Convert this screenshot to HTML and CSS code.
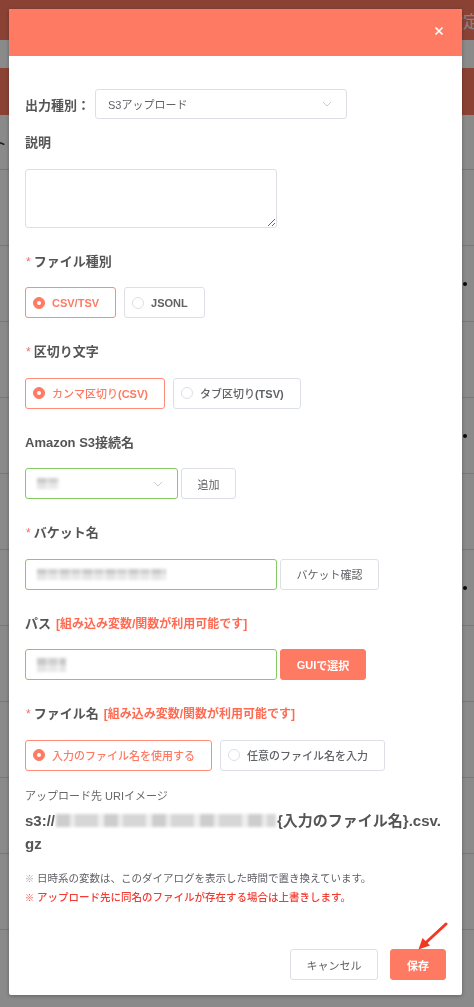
FILE: index.html
```html
<!DOCTYPE html>
<html lang="ja">
<head>
<meta charset="utf-8">
<title>S3アップロード設定</title>
<link rel="stylesheet" href="styles.css">
</head>
<body>
<div class="page">
  <header class="page-header"><span class="page-title">設定</span></header>
  <div class="page-toolbar"></div>
  <div class="page-tabs"></div>
  <div class="page-content">
    <div class="page-heading"><span class="heading-text">リスト</span></div>
    <div class="page-row"></div>
    <div class="page-row"><span class="row-dot"></span></div>
    <div class="page-row"></div>
    <div class="page-row"><span class="row-dot"></span></div>
    <div class="page-row"></div>
    <div class="page-row"><span class="row-dot"></span></div>
    <div class="page-row"></div>
    <div class="page-row"></div>
    <div class="page-row"></div>
    <div class="page-row"></div>
  </div>
</div>

<div class="overlay"></div>

<div class="dialog" role="dialog">
  <div class="dialog-header">
    <button class="dialog-close" aria-label="閉じる">
      <svg width="10" height="10" viewBox="0 0 10 10"><path d="M1.5 1.5L8.5 8.5M8.5 1.5L1.5 8.5" stroke="#fff" stroke-width="1.7"/></svg>
    </button>
  </div>
  <div class="dialog-body">
    <div class="inline-item">
      <span class="form-label-inline">出力種別：</span>
      <div class="select select-wide">
        <span class="select-text">S3アップロード</span>
        <svg class="chevron" width="10" height="6" viewBox="0 0 10 6"><path d="M1 1L5 5L9 1" fill="none" stroke="#c8cbd1" stroke-width="1"/></svg>
      </div>
    </div>

    <div class="form-item">
      <div class="form-label">説明</div>
      <textarea class="textarea"></textarea>
    </div>

    <div class="form-item">
      <div class="form-label"><span class="req">*</span>ファイル種別</div>
      <div class="radio-group">
        <label class="radio checked"><span class="radio-dot"></span><span class="en">CSV/TSV</span></label>
        <label class="radio"><span class="radio-dot"></span><span class="en">JSONL</span></label>
      </div>
    </div>

    <div class="form-item">
      <div class="form-label"><span class="req">*</span>区切り文字</div>
      <div class="radio-group">
        <label class="radio checked"><span class="radio-dot"></span><span>カンマ区切り<span class="en">(CSV)</span></span></label>
        <label class="radio"><span class="radio-dot"></span><span>タブ区切り<span class="en">(TSV)</span></span></label>
      </div>
    </div>

    <div class="form-item">
      <div class="form-label">Amazon S3接続名</div>
      <div class="control-row">
        <div class="select select-narrow valid">
          <span class="blur blur-s3"></span>
          <svg class="chevron" width="10" height="6" viewBox="0 0 10 6"><path d="M1 1L5 5L9 1" fill="none" stroke="#c8cbd1" stroke-width="1"/></svg>
        </div>
        <button class="btn btn-add">追加</button>
      </div>
    </div>

    <div class="form-item">
      <div class="form-label"><span class="req">*</span>バケット名</div>
      <div class="control-row">
        <div class="input valid"><span class="blur blur-bucket"></span></div>
        <button class="btn btn-check">バケット確認</button>
      </div>
    </div>

    <div class="form-item">
      <div class="form-label">パス<span class="hint">[組み込み変数/関数が利用可能です]</span></div>
      <div class="control-row">
        <div class="input valid"><span class="blur blur-path"></span></div>
        <button class="btn btn-primary btn-gui"><span class="en">GUI</span>で選択</button>
      </div>
    </div>

    <div class="form-item form-item-last">
      <div class="form-label"><span class="req">*</span>ファイル名<span class="hint">[組み込み変数/関数が利用可能です]</span></div>
      <div class="radio-group">
        <label class="radio checked"><span class="radio-dot"></span><span>入力のファイル名を使用する</span></label>
        <label class="radio"><span class="radio-dot"></span><span>任意のファイル名を入力</span></label>
      </div>
    </div>

    <div class="uri-caption">アップロード先 URIイメージ</div>
    <div class="uri">s3://<span class="blur blur-uri"></span>{入力のファイル名}.csv.gz</div>

    <div class="notes">
      <p class="note"><span class="mark">※</span> 日時系の変数は、このダイアログを表示した時間で置き換えています。</p>
      <p class="note note-warn"><span class="mark">※</span> アップロード先に同名のファイルが存在する場合は上書きします。</p>
    </div>

    <div class="dialog-footer">
      <button class="btn btn-cancel">キャンセル</button>
      <button class="btn btn-primary btn-save">保存</button>
      <svg class="arrow" width="32" height="30" viewBox="0 0 32 30">
        <path d="M29 2L9 20.5" stroke="#ee3a22" stroke-width="3" stroke-linecap="round"/>
        <path d="M1.5 27.5L13 23.5L5.5 16Z" fill="#ee3a22"/>
      </svg>
    </div>
  </div>
</div>
</body>
</html>
```

FILE: styles.css
```css
* { box-sizing: border-box; }

html, body {
  margin: 0;
  height: 1007px;
  overflow: hidden;
}

body {
  font-family: "Liberation Sans", "Noto Sans CJK JP", sans-serif;
  color: #555;
}

/* ---------- underlying page ---------- */
.page {
  height: 1007px;
  background: #fff;
}

.page-header {
  height: 40px;
  background: #ff7a63;
  display: flex;
  justify-content: flex-end;
  align-items: center;
  overflow: hidden;
}

.page-title {
  font-family: "Noto Sans CJK JP", sans-serif;
  font-size: 17px;
  color: #f4f4f4;
  margin-right: -6px;
}

.page-toolbar {
  height: 28px;
  background: #fff;
}

.page-tabs {
  height: 47px;
  background: #ff7a63;
}

.page-content {
  background: #fff;
}

.page-heading {
  height: 55px;
  display: flex;
  align-items: center;
  border-bottom: 1px solid #dcdcdc;
  overflow: hidden;
}

.heading-text {
  font-family: "Noto Sans CJK JP", sans-serif;
  font-size: 16px;
  color: #333;
  margin-left: -41px;
}

.page-row {
  height: 76px;
  border-bottom: 1px solid #dedede;
  display: flex;
  justify-content: flex-end;
  align-items: center;
  padding-right: 7px;
}

.row-dot {
  width: 4px;
  height: 4px;
  border-radius: 50%;
  background: #111;
}

.overlay {
  position: fixed;
  inset: 0;
  background: rgba(0, 0, 0, 0.46);
}

/* ---------- dialog ---------- */
.dialog {
  position: fixed;
  top: 9px;
  left: 9px;
  width: 453px;
  background: #fff;
  border-radius: 2px;
  box-shadow: 0 1px 4px rgba(0, 0, 0, 0.3);
}

.dialog-header {
  height: 47px;
  background: #ff7a63;
  display: flex;
  justify-content: flex-end;
  align-items: flex-start;
  padding: 17px 18px 0 0;
  border-radius: 2px 2px 0 0;
}

.dialog-close {
  border: 0;
  padding: 0;
  background: none;
  width: 10px;
  height: 10px;
  display: block;
  line-height: 0;
}

.dialog-close svg {
  display: block;
}

.dialog-body {
  padding: 33px 16px 15px;
}

.inline-item {
  display: flex;
  align-items: center;
  gap: 5px;
  margin-bottom: 12px;
}

.form-label-inline,
.form-label {
  font-size: 13px;
  font-weight: 700;
  color: #555;
}

.form-item {
  margin-bottom: 22px;
}

.form-item-last {
  margin-bottom: 17px;
}

.form-label {
  height: 24px;
  line-height: 24px;
  margin-bottom: 13.5px;
  display: flex;
  align-items: center;
}

.req {
  color: #f56c6c;
  font-size: 12px;
  font-weight: 400;
  margin-right: 3px;
  margin-left: 1px;
}

.hint {
  color: #ff6a52;
  font-size: 12px;
  font-weight: 700;
  margin-left: 5px;
}

/* select / input */
.select,
.input {
  height: 31px;
  border: 1px solid #dcdfe6;
  border-radius: 3px;
  background: #fff;
  display: flex;
  align-items: center;
  padding: 0 11px 0 11px;
}

.select {
  justify-content: space-between;
}

.select-wide {
  width: 252px;
  height: 30px;
}

.select-narrow {
  width: 153px;
}

.input {
  width: 252px;
}

.valid {
  border-color: #86cb66;
}

.select-text {
  font-size: 11px;
  color: #606266;
  padding-left: 1px;
}

.chevron {
  display: block;
  margin-right: 3px;
}

.textarea {
  display: block;
  width: 252px;
  height: 59px;
  border: 1px solid #dcdfe6;
  border-radius: 3px;
  resize: vertical;
  font-family: inherit;
  margin: 0;
}

.control-row {
  display: flex;
  gap: 3px;
}

/* blurred values */
.blur {
  display: inline-block;
  height: 11px;
  filter: blur(1.6px);
  background:
    linear-gradient(rgba(255,255,255,0) 50%, rgba(255,255,255,0.5) 50%),
    repeating-linear-gradient(90deg, #c9c9c9 0 9px, #e0e0e0 9px 12px, #d0d0d0 12px 20px, #e6e6e6 20px 23px);
}

.blur-s3 { width: 22px; }
.blur-bucket { width: 129px; }
.blur-path { width: 29px; height: 14px; }
.blur-uri {
  width: 220px;
  height: 13px;
  margin-left: 1px;
  margin-right: 1px;
  vertical-align: -1px;
  filter: blur(1.4px);
  background:
    repeating-linear-gradient(90deg, #cdcdcd 0 14px, #ececec 14px 19px, #d6d6d6 19px 42px, #efefef 42px 48px);
}

/* radio */
.radio-group {
  display: flex;
  gap: 8px;
}

.radio {
  height: 31px;
  border: 1px solid #dcdfe6;
  border-radius: 3px;
  padding: 0 16px 0 7px;
  display: flex;
  align-items: center;
  gap: 7px;
  font-size: 11px;
  font-weight: 500;
  color: #606266;
  white-space: nowrap;
}

.radio.checked {
  border-color: #ff8c78;
  color: #ff7a63;
}

.radio-dot {
  width: 12px;
  height: 12px;
  border-radius: 50%;
  border: 1px solid #dcdfe6;
  background: #fff;
  position: relative;
  flex: none;
}

.radio.checked .radio-dot {
  background: #ff7a63;
  border-color: #ff7a63;
}

.radio.checked .radio-dot::after {
  content: "";
  position: absolute;
  left: 3px;
  top: 3px;
  width: 4px;
  height: 4px;
  border-radius: 50%;
  background: #fff;
}

.en {
  font-weight: 700;
}

/* buttons */
.btn {
  height: 31px;
  border: 1px solid #dcdfe6;
  border-radius: 3px;
  background: #fff;
  font-family: inherit;
  font-size: 11px;
  color: #606266;
  padding: 0;
  display: flex;
  align-items: center;
  justify-content: center;
}

.btn-add { width: 55px; }
.btn-check { width: 99px; }
.btn-gui { width: 86px; }
.btn-cancel { width: 88px; }
.btn-save { width: 56px; }

.btn-primary {
  background: #ff7a63;
  border-color: #ff7a63;
  color: #fff;
  font-weight: 700;
}

/* URI preview */
.uri-caption {
  font-size: 11px;
  line-height: 16px;
  color: #666;
}

.uri {
  margin-top: 5px;
  font-size: 15px;
  line-height: 23px;
  font-weight: 700;
  color: #555;
  word-break: break-all;
}

.notes {
  margin-top: 14.5px;
}

.note {
  margin: 0;
  font-size: 10.5px;
  line-height: 18px;
  color: #606266;
}

.mark {
  color: #9a9a9a;
  font-size: 9px;
}

.note-warn {
  color: #f23b32;
  font-weight: 500;
}

.note-warn .mark {
  color: #f23b32;
}

.dialog-footer {
  margin-top: 42px;
  display: flex;
  justify-content: flex-end;
  gap: 12px;
  position: relative;
}

.arrow {
  position: absolute;
  right: -3px;
  top: -27px;
}
```
